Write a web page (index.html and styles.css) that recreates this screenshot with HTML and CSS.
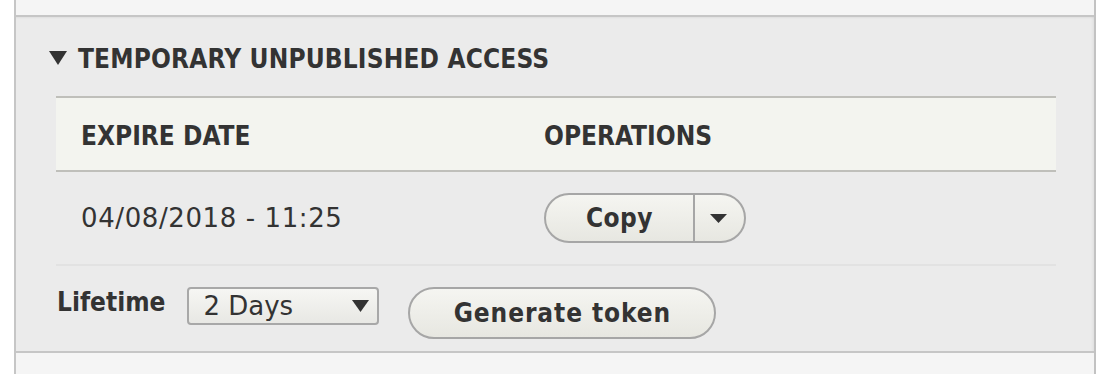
FILE: index.html
```html
<!DOCTYPE html>
<html lang="en">
<head>
<meta charset="utf-8">
<title>Temporary unpublished access</title>
<link rel="stylesheet" href="styles.css">
</head>
<body>
<div class="frame">
  <div class="prev"></div>
  <details class="access" open>
    <summary class="access-summary">
      <svg class="summary-caret" width="18" height="14" viewBox="0 0 18 14" aria-hidden="true"><path d="M0 0H18L9 14Z"/></svg>
      <span class="summary-text">Temporary unpublished access</span>
    </summary>
    <div class="access-body">
      <table class="tokens">
        <thead>
          <tr><th class="col-date">Expire date</th><th>Operations</th></tr>
        </thead>
        <tbody>
          <tr>
            <td class="col-date">04/08/2018 - 11:25</td>
            <td>
              <div class="dropbutton">
                <span class="dropbutton-main">Copy</span>
                <span class="dropbutton-toggle"><svg width="17" height="9" viewBox="0 0 17 9" aria-hidden="true"><path d="M0 0H17L8.5 9Z"/></svg></span>
              </div>
            </td>
          </tr>
        </tbody>
      </table>
      <div class="generate-row">
        <label class="lifetime-label">Lifetime</label>
        <div class="select"><span class="select-value">2 Days</span><svg width="17" height="12" viewBox="0 0 17 12" aria-hidden="true"><path d="M0 0H17L8.5 12Z"/></svg></div>
        <button class="button" type="button">Generate token</button>
      </div>
    </div>
  </details>
  <div class="next"></div>
</div>
</body>
</html>
```
FILE: styles.css
```css
html, body {
  margin: 0;
  padding: 0;
  background: #ffffff;
  height: 100%;
}

body {
  font-family: "DejaVu Sans", "Liberation Sans", sans-serif;
  font-size: 26px;
  color: #333333;
}

.frame {
  margin-left: 14px;
  width: 1082px;
  height: 374px;
  box-sizing: border-box;
  border-left: 2px solid #c6c6c6;
  border-right: 2px solid #c2c2c2;
  display: flex;
  flex-direction: column;
  overflow: hidden;
}

.prev {
  height: 15px;
  flex: none;
  background: #f5f5f5;
  border-bottom: 2px solid #c6c6c6;
}

.access {
  flex: none;
  background: #ebebeb;
  box-shadow: inset 0 2px 2px -1px rgba(0, 0, 0, 0.05), inset -3px 0 3px -2px rgba(0, 0, 0, 0.06);
}

.access-summary {
  list-style: none;
  display: flex;
  align-items: center;
  padding: 27px 0 0 33px;
  height: 30px;
  cursor: pointer;
}

.access-summary::-webkit-details-marker {
  display: none;
}

.summary-caret {
  fill: #333333;
  margin-right: 11px;
  margin-bottom: 2px;
}

.summary-text,
.tokens th,
.lifetime-label,
.dropbutton-main,
.button {
  font-family: "DejaVu Sans Condensed", "DejaVu Sans", sans-serif;
  font-weight: bold;
  font-size: 26px;
}

.summary-text {
  text-transform: uppercase;
  line-height: 30px;
  letter-spacing: 0.15px;
  color: #333333;
}

.access-body {
  padding: 22px 38px 12px 40px;
}

.tokens {
  width: 1000px;
  border-collapse: separate;
  border-spacing: 0;
}

.tokens th {
  text-align: left;
  text-transform: uppercase;
  line-height: 30px;
  padding: 23px 25px 19px;
  background: #f3f4ef;
  border-top: 2px solid #bfbfba;
  border-bottom: 2px solid #bfbfba;
  color: #333333;
}

.tokens .col-date {
  width: 413px;
}

.tokens td {
  padding: 21px 25px;
  border-bottom: 2px solid #e2e2e2;
  vertical-align: middle;
  line-height: 30px;
  letter-spacing: 0.6px;
}

.dropbutton {
  display: inline-flex;
  width: 202px;
  height: 50px;
  box-sizing: border-box;
  border: 2px solid #a6a6a6;
  border-radius: 25px;
  background: linear-gradient(#f5f5f1, #e7e7e1);
  overflow: hidden;
  letter-spacing: 0;
}

.dropbutton-main {
  width: 147px;
  display: flex;
  align-items: center;
  justify-content: center;
  line-height: 30px;
  letter-spacing: 0.5px;
}

.dropbutton-toggle {
  flex: 1;
  border-left: 2px solid #a6a6a6;
  display: flex;
  align-items: center;
  justify-content: center;
  padding-right: 2px;
}

.dropbutton-toggle svg,
.select svg {
  fill: #333333;
}

.generate-row {
  display: flex;
  align-items: flex-start;
  margin-top: 21px;
}

.lifetime-label {
  line-height: 30px;
  margin-left: 1px;
  margin-right: 22px;
  color: #333333;
}

.select {
  width: 192px;
  height: 38px;
  box-sizing: border-box;
  border: 2px solid #a8a8a8;
  border-radius: 4px;
  background: linear-gradient(#f6f6f3, #e8e8e4);
  display: flex;
  align-items: center;
  justify-content: space-between;
  padding: 0 8px 0 14px;
}

.select-value {
  line-height: 30px;
  color: #333333;
}

.button {
  margin-left: 29px;
  width: 308px;
  height: 52px;
  box-sizing: border-box;
  border: 2px solid #a6a6a6;
  border-radius: 26px;
  background: linear-gradient(#f5f5f1, #e7e7e1);
  color: #333333;
  padding: 0;
  line-height: 30px;
  letter-spacing: 0.9px;
  cursor: pointer;
}

.next {
  flex: 1;
  background: #f5f5f5;
  border-top: 2px solid #c6c6c6;
}
```
